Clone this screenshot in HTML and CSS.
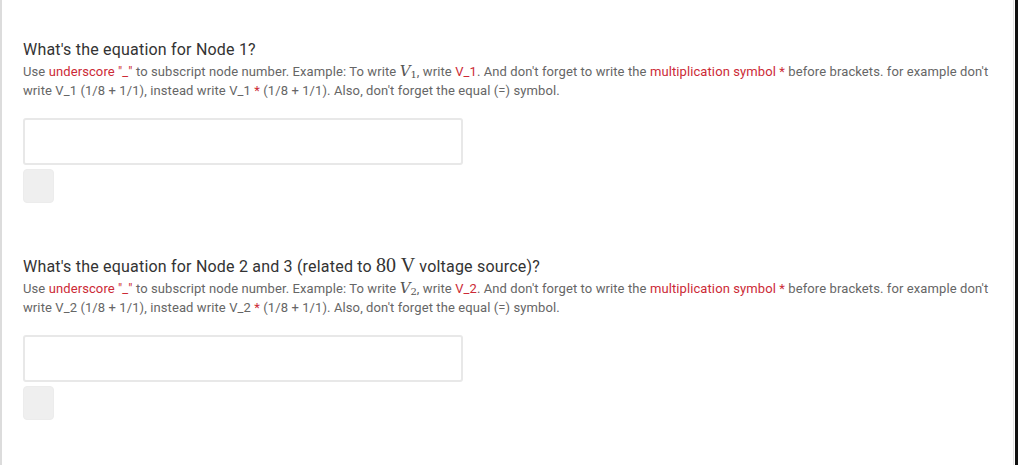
FILE: index.html
```html
<!DOCTYPE html>
<html>
<head>
<meta charset="utf-8">
<link rel="stylesheet" href="styles.css">
</head>
<body>
<div class="frame">
  <div class="content">
    <section class="question">
      <h2 class="q-title">What's the equation for Node 1?</h2>
      <p class="q-desc">Use <span class="red">underscore "_"</span> to subscript node number. Example: To write <span class="math"><i>V</i><sub>1</sub></span>, write <span class="red">V_1</span>. And don't forget to write the <span class="red">multiplication symbol *</span> before brackets. for example don't write V_1 (1/8 + 1/1), instead write V_1 <span class="red">*</span> (1/8 + 1/1). Also, don't forget the equal (=) symbol.</p>
      <div class="answer"></div>
      <div class="btn"></div>
    </section>
    <section class="question second">
      <h2 class="q-title">What's the equation for Node 2 and 3 (related to <span class="mathbig">80 V</span> voltage source)?</h2>
      <p class="q-desc">Use <span class="red">underscore "_"</span> to subscript node number. Example: To write <span class="math"><i>V</i><sub>2</sub></span>, write <span class="red">V_2</span>. And don't forget to write the <span class="red">multiplication symbol *</span> before brackets. for example don't write V_2 (1/8 + 1/1), instead write V_2 <span class="red">*</span> (1/8 + 1/1). Also, don't forget the equal (=) symbol.</p>
      <div class="answer"></div>
      <div class="btn"></div>
    </section>
  </div>
</div>
</body>
</html>
```

FILE: styles.css
```css
html, body {
  margin: 0;
  padding: 0;
  background: #fff;
}
body {
  font-family: Roboto, "Liberation Sans", sans-serif;
  width: 1018px;
  height: 465px;
  overflow: hidden;
}
.frame {
  box-sizing: border-box;
  height: 465px;
  width: 1018px;
  border-left: 2px solid #dcdcdc;
  border-right: 3px solid #111;
  position: relative;
}
.frame::after {
  content: "";
  position: absolute;
  top: 0;
  bottom: 0;
  right: 1px;
  width: 1px;
  background: #e4e4e4;
}
.content {
  padding: 40px 20px 0 21px;
}
.question.second {
  margin-top: 54px;
}
.q-title {
  margin: 0;
  font-size: 16px;
  letter-spacing: 0.2px;
  font-weight: 400;
  line-height: 20px;
  color: #333;
}
.q-desc {
  margin: 3px 0 0;
  font-size: 13px;
  letter-spacing: 0.1px;
  line-height: 18.5px;
  color: #666;
}
.red {
  color: #cc2a36;
}
.math {
  font-family: "DejaVu Serif", "Liberation Serif", serif;
  font-size: 15px;
  color: #555;
  line-height: 0;
  letter-spacing: 0;
}
.math i {
  font-style: italic;
}
.math sub {
  font-style: normal;
  font-size: 10px;
  vertical-align: -2px;
}
.mathbig {
  font-family: "Liberation Serif", serif;
  font-size: 20px;
  line-height: 0;
  letter-spacing: 0;
}
.answer {
  box-sizing: border-box;
  margin-top: 18px;
  width: 440px;
  height: 47px;
  border: 2px solid #e8e8e8;
  border-radius: 3px;
  background: #fff;
}
.btn {
  box-sizing: border-box;
  margin-top: 4px;
  width: 31px;
  height: 34px;
  border: 1px solid #ececec;
  border-radius: 4px;
  background: #efefef;
}
```
